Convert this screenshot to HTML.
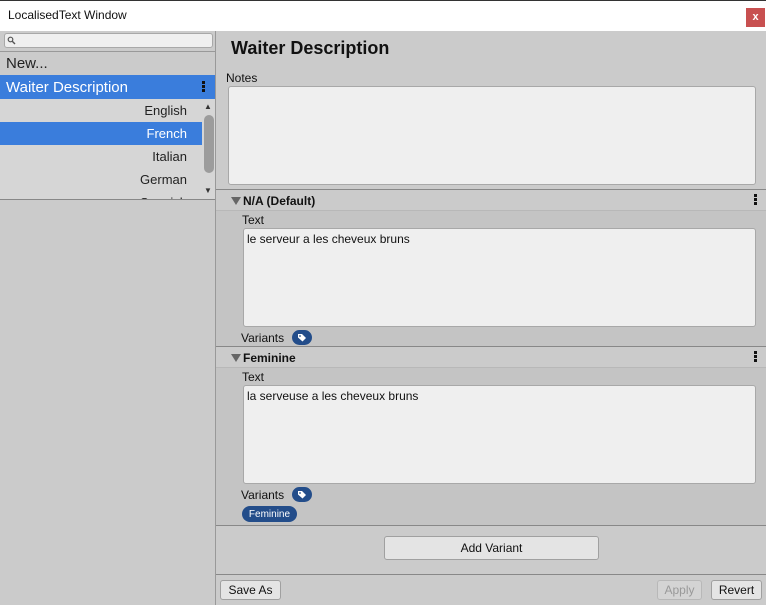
<!DOCTYPE html>
<html><head><meta charset="utf-8"><style>
*{box-sizing:border-box;margin:0;padding:0}
body{width:766px;height:605px;overflow:hidden;background:#cbcbcb;font-family:"Liberation Sans",sans-serif;font-size:12px;color:#111;position:relative}
.a{position:absolute}
.field{position:absolute;background:#efefef;border:1px solid #a8a8a8;border-radius:3px;padding:3px 3px;font-size:12px}
.btn{position:absolute;background:#e4e4e4;border:1px solid #a0a0a0;border-radius:3px;text-align:center;font-size:12px;line-height:18px}
.tag{display:inline-block;background:#234d8a;border-radius:9px;color:#fff}
.dots{position:absolute;width:3px}
.dots i{display:block;width:3px;height:3px;background:#111;margin-bottom:1px}
.tri{position:absolute;width:0;height:0;border-left:5px solid transparent;border-right:5px solid transparent;border-top:8px solid #666}
</style></head><body>
<div class="a" style="left:0;top:0;width:766px;height:31px;background:#fff;border-top:1px solid #333"></div>
<div class="a" style="left:8px;top:8px;font-size:12px">LocalisedText Window</div>
<div class="a" style="left:746px;top:8px;width:19px;height:19px;background:#c85050;color:#fff;font-size:11px;text-align:center;line-height:18px;font-weight:bold">x</div>

<div class="a" style="left:0;top:31px;width:216px;height:574px;background:#cbcbcb;border-right:1px solid #999"></div>
<div class="a" style="left:4px;top:33px;width:209px;height:15px;background:#efefef;border:1px solid #a8a8a8;border-radius:3px"></div>
<svg class="a" style="left:7px;top:36px" width="9" height="9" viewBox="0 0 9 9"><circle cx="3.5" cy="3.5" r="2.3" fill="none" stroke="#555" stroke-width="1.2"/><path d="M5 5L8 8" stroke="#555" stroke-width="1.4"/></svg>
<div class="a" style="left:0;top:51px;width:215px;height:1px;background:#999"></div>
<div class="a" style="left:6px;top:55px;font-size:15px;color:#222">New...</div>
<div class="a" style="left:0;top:75px;width:215px;height:24px;background:#3a7ddc"></div>
<div class="a" style="left:6px;top:79px;font-size:15px;color:#fff">Waiter Description</div>
<div class="dots" style="left:202px;top:81px"><i></i><i></i><i></i></div>
<div class="a" style="left:0;top:99px;width:202px;height:100px;background:#d6d6d6;overflow:hidden">
 <div style="height:23px;text-align:right;padding-right:15px;line-height:23px;font-size:13px;color:#222">English</div>
 <div style="height:23px;text-align:right;padding-right:15px;line-height:23px;font-size:13px;color:#fff;background:#3a7ddc">French</div>
 <div style="height:23px;text-align:right;padding-right:15px;line-height:23px;font-size:13px;color:#222">Italian</div>
 <div style="height:23px;text-align:right;padding-right:15px;line-height:23px;font-size:13px;color:#222">German</div>
 <div style="height:23px;text-align:right;padding-right:15px;line-height:23px;font-size:13px;color:#222">Spanish</div>
</div>
<div class="a" style="left:202px;top:99px;width:13px;height:100px;background:#d6d6d6"></div>
<div class="a" style="left:204px;top:102px;font-size:8px;color:#333">▲</div>
<div class="a" style="left:204px;top:115px;width:10px;height:58px;background:#9c9c9c;border-radius:5px"></div>
<div class="a" style="left:204px;top:186px;font-size:8px;color:#333">▼</div>
<div class="a" style="left:0;top:199px;width:215px;height:1px;background:#888"></div>

<div class="a" style="left:231px;top:38px;font-size:18px;font-weight:bold">Waiter Description</div>
<div class="a" style="left:226px;top:71px">Notes</div>
<div class="field" style="left:228px;top:86px;width:528px;height:99px"></div>
<div class="a" style="left:216px;top:189px;width:550px;height:1px;background:#888"></div>

<div class="a" style="left:216px;top:190px;width:550px;height:21px;background:#cbcbcb;border-bottom:1px solid #b8b8b8"></div>
<div class="a" style="left:216px;top:211px;width:550px;height:135px;background:#c4c4c4"></div>
<div class="tri" style="left:231px;top:197px"></div>
<div class="a" style="left:243px;top:194px;font-weight:bold">N/A (Default)</div>
<div class="dots" style="left:754px;top:194px"><i></i><i></i><i></i></div>
<div class="a" style="left:242px;top:213px">Text</div>
<div class="field" style="left:243px;top:228px;width:513px;height:99px">le serveur a les cheveux bruns</div>
<div class="a" style="left:241px;top:331px">Variants</div>
<svg class="a" style="left:292px;top:330px" width="20" height="15" viewBox="0 0 20 15"><rect width="20" height="15" rx="7.5" fill="#234d8a"/><path d="M6 4L10 4L14 8L10.5 11.5L6 7.5Z" fill="#fff"/><circle cx="8" cy="6" r="0.9" fill="#234d8a"/></svg>
<div class="a" style="left:216px;top:346px;width:550px;height:1px;background:#888"></div>

<div class="a" style="left:216px;top:347px;width:550px;height:21px;background:#cbcbcb;border-bottom:1px solid #b8b8b8"></div>
<div class="a" style="left:216px;top:368px;width:550px;height:157px;background:#c4c4c4"></div>
<div class="tri" style="left:231px;top:354px"></div>
<div class="a" style="left:243px;top:351px;font-weight:bold">Feminine</div>
<div class="dots" style="left:754px;top:351px"><i></i><i></i><i></i></div>
<div class="a" style="left:242px;top:370px">Text</div>
<div class="field" style="left:243px;top:385px;width:513px;height:99px">la serveuse a les cheveux bruns</div>
<div class="a" style="left:241px;top:488px">Variants</div>
<svg class="a" style="left:292px;top:487px" width="20" height="15" viewBox="0 0 20 15"><rect width="20" height="15" rx="7.5" fill="#234d8a"/><path d="M6 4L10 4L14 8L10.5 11.5L6 7.5Z" fill="#fff"/><circle cx="8" cy="6" r="0.9" fill="#234d8a"/></svg>
<div class="tag a" style="left:242px;top:506px;width:55px;height:16px;font-size:10px;text-align:center;line-height:17px">Feminine</div>
<div class="a" style="left:216px;top:525px;width:550px;height:1px;background:#888"></div>

<div class="btn" style="left:384px;top:536px;width:215px;height:24px;line-height:22px">Add Variant</div>
<div class="a" style="left:216px;top:574px;width:550px;height:1px;background:#888"></div>
<div class="btn" style="left:220px;top:580px;width:61px;height:20px">Save As</div>
<div class="btn" style="left:657px;top:580px;width:45px;height:20px;color:#999;background:#d4d4d4;border-color:#b8b8b8">Apply</div>
<div class="btn" style="left:711px;top:580px;width:51px;height:20px">Revert</div>
</body></html>
